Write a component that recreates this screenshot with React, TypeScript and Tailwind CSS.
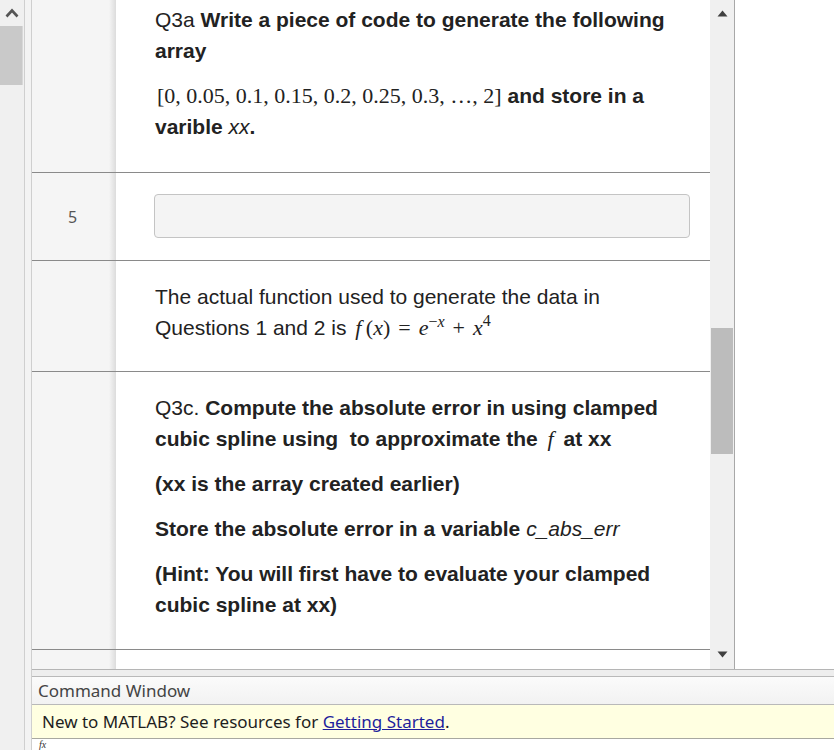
import React from 'react'

const sans = { fontFamily: '"Liberation Sans", Arial, sans-serif' }
const serif = { fontFamily: '"Liberation Serif", "Times New Roman", serif' }
const ui = { fontFamily: '"Noto Sans", "Open Sans", sans-serif' }

function Gutter({ label }: { label?: string }) {
  return (
    <div className="relative w-[84px] shrink-0 bg-[#f5f5f5] flex items-center justify-center">
      {label && (
        <span className="text-[16px] text-[#555] -ml-[3px]" style={ui}>
          {label}
        </span>
      )}
      <div className="absolute right-0 top-0 bottom-0 w-[7px] bg-linear-to-r from-[#f5f5f5] to-[#dcdcdc]" />
    </div>
  )
}

function Cell({ h, label, children }: { h: string; label?: string; children?: React.ReactNode }) {
  return (
    <div className={`flex border-b border-[#8a8a8a] box-border shrink-0 ${h}`}>
      <Gutter label={label} />
      <div className="flex-1 bg-white">{children}</div>
    </div>
  )
}

export default function App() {
  return (
    <div className="w-[834px] h-[750px] overflow-hidden flex bg-white text-[#222]" style={sans}>
      {/* left collapsed panel */}
      <div className="w-[25px] shrink-0 bg-[#f0f0f0] border-r border-[#cfcfcf] flex flex-col">
        <div className="h-[26px] flex items-start justify-center pt-[8px]">
          <svg width="14" height="10" viewBox="0 0 14 10">
            <path d="M1.5 8.5 L7 2.5 L12.5 8.5" fill="none" stroke="#555" strokeWidth="2.6" />
          </svg>
        </div>
        <div className="h-[59px] w-[23px] bg-[#c9c9c9] border-r border-[#d8d8d8]" />
      </div>
      <div className="w-[7px] shrink-0 bg-[#f3f3f3] border-r border-[#cfcfcf]" />

      <div className="flex-1 flex flex-col">
        {/* editor area */}
        <div className="h-[670px] shrink-0 flex border-b border-[#b5b5b5] box-border">
          <div className="w-[678px] shrink-0 flex flex-col overflow-hidden">
            <Cell h="h-[173px]">
              <div className="pt-[4px] pl-[39px] pr-[12px] text-[21px] leading-[31px]">
                <p className="mb-[14px] whitespace-nowrap">
                  Q3a <b>Write a piece of code to generate the following</b>
                  <br />
                  <b>array</b>
                </p>
                <p className="whitespace-nowrap">
                  <span className="text-[22px] ml-[2px]" style={serif}>
                    [0, 0.05, 0.1, 0.15, 0.2, 0.25, 0.3, …, 2]
                  </span>{' '}
                  <b>and store in a</b>
                  <br />
                  <b>varible</b> <i>xx</i>
                  <b>.</b>
                </p>
              </div>
            </Cell>
            <Cell h="h-[88px]" label="5">
              <div className="pt-[21px] pl-[38px]">
                <div className="w-[536px] h-[44px] rounded-[4px] border border-[#c4c4c4] bg-[#f4f4f4]" />
              </div>
            </Cell>
            <Cell h="h-[111px]">
              <div className="pt-[20px] pl-[39px] pr-[12px] text-[21px] leading-[31px]">
                <p className="whitespace-nowrap">
                  The actual function used to generate the data in
                  <br />
                  Questions 1 and 2 is{' '}
                  <span className="text-[22px] ml-[3px]" style={serif}>
                    <i>f</i>&#8201;(<i>x</i>)<span className="mx-[8px]">=</span><i>e</i>
                    <sup className="text-[16px] -top-[8px]">−<i>x</i></sup>
                    <span className="mx-[8px]">+</span>
                    <i>x</i>
                    <sup className="text-[16px] -top-[9px]">4</sup>
                  </span>
                </p>
              </div>
            </Cell>
            <Cell h="h-[278px]">
              <div className="pt-[20px] pl-[39px] pr-[12px] text-[21px] leading-[31px]">
                <p className="mb-[14px] whitespace-nowrap">
                  Q3c. <b>Compute the absolute error in using clamped</b>
                  <br />
                  <b>cubic spline using&nbsp; to approximate the</b>{' '}
                  <i className="text-[22px] mx-[4px]" style={serif}>f</i> <b>at xx</b>
                </p>
                <p className="mb-[14px]">
                  <b>(xx is the array created earlier)</b>
                </p>
                <p className="mb-[14px]">
                  <b>Store the absolute error in a variable</b> <i>c_abs_err</i>
                </p>
                <p className="whitespace-nowrap">
                  <b>(Hint: You will first have to evaluate your clamped</b>
                  <br />
                  <b>cubic spline at xx)</b>
                </p>
              </div>
            </Cell>
            <div className="flex flex-1">
              <Gutter />
              <div className="flex-1 bg-white" />
            </div>
          </div>

          {/* right scrollbar */}
          <div className="w-[25px] shrink-0 bg-[#f0f0f0] border-r border-[#a8a8a8] flex flex-col items-center">
            <div className="h-[26px] flex items-center justify-center">
              <svg width="11" height="7" viewBox="0 0 11 7">
                <path d="M0.5 6.5 L5.5 0.5 L10.5 6.5 Z" fill="#404040" />
              </svg>
            </div>
            <div className="h-[302px]" />
            <div className="w-[22px] h-[126px] bg-[#bcbcbc]" />
            <div className="flex-1" />
            <div className="h-[26px] flex items-center justify-center pb-[4px]">
              <svg width="11" height="7" viewBox="0 0 11 7">
                <path d="M0.5 0.5 L10.5 0.5 L5.5 6.5 Z" fill="#404040" />
              </svg>
            </div>
          </div>
          <div className="flex-1 bg-white" />
        </div>

        {/* command window */}
        <div className="h-[6px] shrink-0 bg-[#eeeeee]" />
        <div
          className="h-[29px] shrink-0 border-t border-b border-[#b9b9b9] bg-linear-to-b from-[#fbfbfb] to-[#f2f2f2] flex items-center pl-[6px] text-[17px] text-[#444]"
          style={ui}
        >
          Command Window
        </div>
        <div
          className="h-[34px] shrink-0 bg-[#ffffe1] border-b border-[#a8a8a0] flex items-center pl-[10px] text-[17px] text-[#1e1e1e]"
          style={ui}
        >
          New to MATLAB? See resources for&nbsp;
          <span className="text-[#1f1f9c] underline">Getting Started</span>.
        </div>
        <div className="flex-1 bg-white pl-[7px] overflow-hidden">
          <span className="block text-[10px] leading-[11px] italic text-[#333]" style={serif}>
            fx
          </span>
        </div>
      </div>
    </div>
  )
}
